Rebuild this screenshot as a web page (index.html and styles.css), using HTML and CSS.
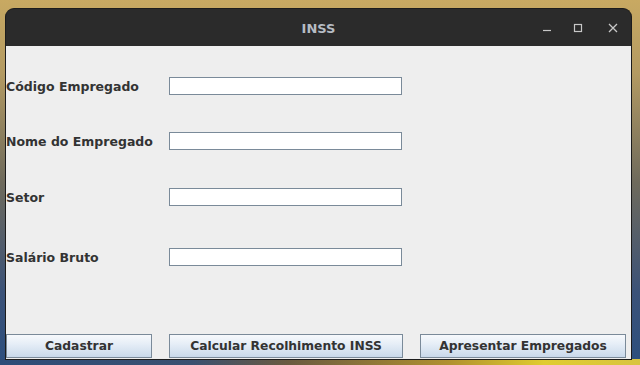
FILE: index.html
```html
<!DOCTYPE html>
<html>
<head>
<meta charset="utf-8">
<link rel="stylesheet" href="styles.css">
</head>
<body>
<div class="desktop">
  <div class="window">
    <div class="titlebar">
      <span class="title">INSS</span>
      <div class="controls">
        <svg class="ctl c-min" width="12" height="12" viewBox="0 0 12 12"><path d="M2 8.5H10" stroke="#c8c8c8" stroke-width="1.2"/></svg>
        <svg class="ctl c-max" width="12" height="12" viewBox="0 0 12 12"><rect x="2.5" y="2.5" width="7" height="7" fill="none" stroke="#c8c8c8" stroke-width="1.2"/></svg>
        <svg class="ctl c-close" width="12" height="12" viewBox="0 0 12 12"><path d="M2 2L10 10M10 2L2 10" stroke="#c8c8c8" stroke-width="1.3"/></svg>
      </div>
    </div>
    <div class="content">
      <div class="form">
        <div class="row r1"><label class="lbl">Código Empregado</label><div class="field"></div></div>
        <div class="row r2"><label class="lbl">Nome do Empregado</label><div class="field"></div></div>
        <div class="row r3"><label class="lbl">Setor</label><div class="field"></div></div>
        <div class="row r4"><label class="lbl">Salário Bruto</label><div class="field"></div></div>
      </div>
      <div class="buttons">
        <button class="btn b1">Cadastrar</button>
        <button class="btn b2">Calcular Recolhimento INSS</button>
        <button class="btn b3">Apresentar Empregados</button>
      </div>
    </div>
  </div>
</div>
</body>
</html>
```
FILE: styles.css
```css
html, body { margin: 0; padding: 0; }
body { width: 640px; height: 365px; overflow: hidden; }
.desktop {
  width: 640px; height: 365px; box-sizing: border-box;
  padding: 8px 8px 0 5px;
  background: linear-gradient(180deg, #c8a962 0%, #b39a62 20%, #6e6a5c 50%, #3b5278 80%, #2c4f7e 100%);
  position: relative;
}
.desktop::after {
  content: ""; position: absolute; left: 0; right: 0; bottom: 0; height: 6px;
  background: linear-gradient(90deg, #2d4c78 0%, #3a5070 30%, #6a5a40 45%, #b09030 70%, #e0cc30 85%, #d8c440 100%);
  z-index: 0;
}
.window {
  position: relative; z-index: 1;
  width: 627px; height: 352px;
  display: flex; flex-direction: column;
}
.titlebar {
  height: 38px; background: #2b2b2b; border-radius: 9px 9px 0 0;
  border: 1px solid #1c1c1c; border-bottom: none; box-sizing: border-box;
  display: flex; align-items: center; justify-content: center; position: relative;
}
.title {
  font-family: "DejaVu Sans", sans-serif; font-weight: bold; font-size: 13px;
  color: #b6bcc4; margin-left: 0; margin-top: 1px;
}
.controls {
  position: absolute; right: 12px; top: 13px;
  display: flex;
}
.ctl { display: block; }
.c-max { margin-left: 19px; }
.c-close { margin-left: 23px; }
.content {
  flex: 1; background: #eeeeee;
  border: 1px solid #1c1c1c; border-top: none;
  display: flex; flex-direction: column;
  font-family: "DejaVu Sans", sans-serif;
}
.form { display: flex; flex-direction: column; padding-top: 31px; }
.row { display: flex; align-items: center; height: 18px; }
.r2 { margin-top: 37px; }
.r3 { margin-top: 38px; }
.r4 { margin-top: 42px; }
.lbl {
  width: 163px; font-weight: bold; font-size: 12.5px; color: #333333;
  padding-top: 1px; white-space: nowrap;
}
.field {
  width: 233px; height: 18px; box-sizing: border-box;
  background: #ffffff; border: 1px solid #7a8a99;
  box-shadow: inset -1px -1px 0 #ffffff;
}
.buttons {
  margin-top: auto; display: flex; padding-bottom: 1px;
}
.btn {
  height: 24px; box-sizing: border-box; margin: 0; padding: 0;
  border: 1px solid #7a8a99;
  background: linear-gradient(180deg, #f7f9fc 0%, #e6eef7 40%, #c9d9ea 100%);
  font-family: "DejaVu Sans", sans-serif; font-weight: bold; font-size: 12.3px; color: #333333;
  white-space: nowrap;
}
.b1 { width: 146px; }
.b2 { width: 234px; margin-left: 17px; }
.b3 { width: 206px; margin-left: 17px; }
```
